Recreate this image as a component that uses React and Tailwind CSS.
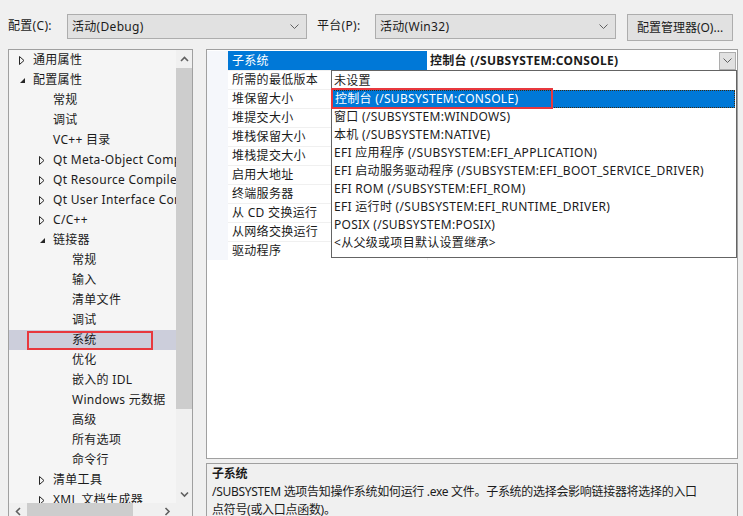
import React from 'react'

const font = "font-['Noto_Sans','Noto_Sans_CJK_SC',sans-serif]"

function Chevron({ className = '' }) {
  return (
    <svg width="9" height="5" viewBox="0 0 9 5" className={className}>
      <path d="M0.5 0.5 L4.5 4.5 L8.5 0.5" fill="none" stroke="#606060" strokeWidth="1" />
    </svg>
  )
}

function ScrollArrow({ dir }) {
  const paths = {
    up: 'M1 5 L4.5 1.5 L8 5',
    down: 'M1 1.5 L4.5 5 L8 1.5',
    left: 'M5 1 L1.5 4.5 L5 8',
    right: 'M1.5 1 L5 4.5 L1.5 8',
  }
  const vertical = dir === 'up' || dir === 'down'
  return (
    <svg width={vertical ? 9 : 7} height={vertical ? 7 : 9} viewBox={vertical ? '0 0 9 7' : '0 0 7 9'}>
      <path d={paths[dir]} fill="none" stroke="#606060" strokeWidth="1.6" />
    </svg>
  )
}

function Expander({ open }) {
  if (open) {
    return (
      <svg width="7" height="7" viewBox="0 0 7 7">
        <path d="M6 1 L6 6 L1 6 Z" fill="#262626" />
      </svg>
    )
  }
  return (
    <svg width="6" height="9" viewBox="0 0 6 9">
      <path d="M0.5 0.5 L5 4.5 L0.5 8.5 Z" fill="none" stroke="#262626" strokeWidth="1" />
    </svg>
  )
}

const tree = [
  { label: '通用属性', level: 0, arrow: 'closed' },
  { label: '配置属性', level: 0, arrow: 'open' },
  { label: '常规', level: 1 },
  { label: '调试', level: 1 },
  { label: 'VC++ 目录', level: 1 },
  { label: 'Qt Meta-Object Compiler', level: 1, arrow: 'closed' },
  { label: 'Qt Resource Compiler', level: 1, arrow: 'closed' },
  { label: 'Qt User Interface Compiler', level: 1, arrow: 'closed' },
  { label: 'C/C++', level: 1, arrow: 'closed' },
  { label: '链接器', level: 1, arrow: 'open' },
  { label: '常规', level: 2 },
  { label: '输入', level: 2 },
  { label: '清单文件', level: 2 },
  { label: '调试', level: 2 },
  { label: '系统', level: 2, selected: true },
  { label: '优化', level: 2 },
  { label: '嵌入的 IDL', level: 2 },
  { label: 'Windows 元数据', level: 2 },
  { label: '高级', level: 2 },
  { label: '所有选项', level: 2 },
  { label: '命令行', level: 2 },
  { label: '清单工具', level: 1, arrow: 'closed' },
  { label: 'XML 文档生成器', level: 1, arrow: 'closed' },
]

const props = [
  '所需的最低版本',
  '堆保留大小',
  '堆提交大小',
  '堆栈保留大小',
  '堆栈提交大小',
  '启用大地址',
  '终端服务器',
  '从 CD 交换运行',
  '从网络交换运行',
  '驱动程序',
]

const options = [
  '未设置',
  '控制台 (/SUBSYSTEM:CONSOLE)',
  '窗口 (/SUBSYSTEM:WINDOWS)',
  '本机 (/SUBSYSTEM:NATIVE)',
  'EFI 应用程序 (/SUBSYSTEM:EFI_APPLICATION)',
  'EFI 启动服务驱动程序 (/SUBSYSTEM:EFI_BOOT_SERVICE_DRIVER)',
  'EFI ROM (/SUBSYSTEM:EFI_ROM)',
  'EFI 运行时 (/SUBSYSTEM:EFI_RUNTIME_DRIVER)',
  'POSIX (/SUBSYSTEM:POSIX)',
  '<从父级或项目默认设置继承>',
]

const indent = ['pl-[10px]', 'pl-[30px]', 'pl-[63px]']

function TreeRow({ item }) {
  return (
    <div className={`relative flex h-[20px] items-center whitespace-nowrap ${indent[item.level]} ${item.selected ? 'bg-[#cccedb]' : ''}`}>
      {item.arrow && (
        <span className="flex w-[14px] shrink-0 items-center">
          <Expander open={item.arrow === 'open'} />
        </span>
      )}
      <span className={`shrink-0 ${item.arrow ? '' : item.level === 1 ? 'pl-[14px]' : ''}`}>{item.label}</span>
      {item.selected && (
        <span className="absolute left-[18px] top-[1px] h-[19px] w-[126px] border-2 border-[#e8383d]" />
      )}
    </div>
  )
}

function Select({ value, width }) {
  return (
    <div className={`flex h-[25px] ${width} items-center justify-between border border-[#adadad] bg-[#e1e1e1] pl-[4px] pr-[7px]`}>
      <span>{value}</span>
      <Chevron />
    </div>
  )
}

export default function App() {
  return (
    <div className={`${font} h-[516px] w-[743px] overflow-hidden bg-[#f0f0f0] text-[12px] leading-[18px] tracking-[0.3px] text-[#1b1b1b]`}>
      {/* configuration / platform bar */}
      <div className="flex h-[49px] items-start pl-[8px] pt-[14px]">
        <span className="w-[59px] pt-[3px]">配置(C):</span>
        <Select value="活动(Debug)" width="w-[240px]" />
        <span className="w-[68px] pl-[10px] pt-[3px]">平台(P):</span>
        <Select value="活动(Win32)" width="w-[241px]" />
        <div className="ml-[11px] flex h-[27px] w-[106px] items-center justify-center border border-[#adadad] bg-[#e1e1e1] tracking-normal">
          配置管理器(O)...
        </div>
      </div>

      <div className="flex items-start">
        {/* category tree */}
        <div className="ml-[8px] flex h-[472px] w-[185px] flex-col border border-[#a0a0a0] bg-[#f5f5f5]">
          <div className="flex h-[453px]">
            <div className="min-w-0 flex-1 overflow-hidden">
              {tree.map((item, i) => (
                <TreeRow key={i} item={item} />
              ))}
            </div>
            <div className="flex w-[16px] shrink-0 flex-col bg-[#f0f0f0]">
              <div className="flex h-[18px] items-center justify-center">
                <ScrollArrow dir="up" />
              </div>
              <div className="h-[341px] bg-[#cdcdcd]" />
              <div className="flex-1" />
              <div className="flex h-[17px] items-center justify-center">
                <ScrollArrow dir="down" />
              </div>
            </div>
          </div>
          <div className="flex h-[17px] bg-[#f0f0f0]">
            <div className="flex w-[18px] items-center justify-center">
              <ScrollArrow dir="left" />
            </div>
            <div className="h-[17px] w-[106px] bg-[#cdcdcd]" />
            <div className="flex-1" />
            <div className="flex w-[17px] items-center justify-center">
              <ScrollArrow dir="right" />
            </div>
            <div className="w-[16px] bg-[#f0f0f0]" />
          </div>
        </div>

        <div className="ml-[13px] flex w-[532px] flex-col gap-[4px]">
          {/* property grid */}
          <div className="relative h-[410px] border border-[#a0a0a0] bg-white pt-[1px]">
            <div className="flex h-[19px]">
              <div className="w-[21px] bg-[#f5f7fb]" />
              <div className="w-[199px] bg-[#0078d7] pl-[4px] leading-[19px] text-white">子系统</div>
              <div className="flex flex-1 items-center justify-between pl-[3px] pr-[1px]">
                <span className="font-bold">控制台 (/SUBSYSTEM:CONSOLE)</span>
                <span className="flex h-[18px] w-[17px] items-center justify-center border border-[#adadad] bg-[#e1e1e1]">
                  <Chevron />
                </span>
              </div>
            </div>
            {props.map((p) => (
              <div key={p} className="flex h-[19px]">
                <div className="w-[21px] bg-[#f5f7fb]" />
                <div className="w-[199px] border-t border-[#f0f0f0] pl-[4px] leading-[18px]">{p}</div>
                <div className="flex-1 border-t border-l border-[#f0f0f0]" />
              </div>
            ))}

            {/* open value list */}
            <div className="absolute left-[124px] top-[20px] h-[188px] w-[406px] border border-[#646464] bg-white pt-[1px]">
              {options.map((o, i) => (
                <div
                  key={o}
                  className={`h-[18px] whitespace-nowrap pl-[2px] ${i === 1 ? 'mr-[1px] border border-dotted border-[#3a2a10] bg-[#0078d7] pl-[1px] leading-[16px] text-white' : ''}`}
                >
                  {o}
                </div>
              ))}
              <span className="absolute left-[-1px] top-[17px] h-[21px] w-[222px] border-2 border-[#e8383d]" />
            </div>
          </div>

          {/* description */}
          <div className="h-[60px] border border-[#a0a0a0] bg-[#f0f0f0] pl-[5px] pt-[1px] tracking-[-0.3px]">
            <div className="font-bold">子系统</div>
            <div>
              /SUBSYSTEM 选项告知操作系统如何运行 .exe 文件。子系统的选择会影响链接器将选择的入口
              <br />
              点符号(或入口点函数)。
            </div>
          </div>
        </div>
      </div>
    </div>
  )
}
